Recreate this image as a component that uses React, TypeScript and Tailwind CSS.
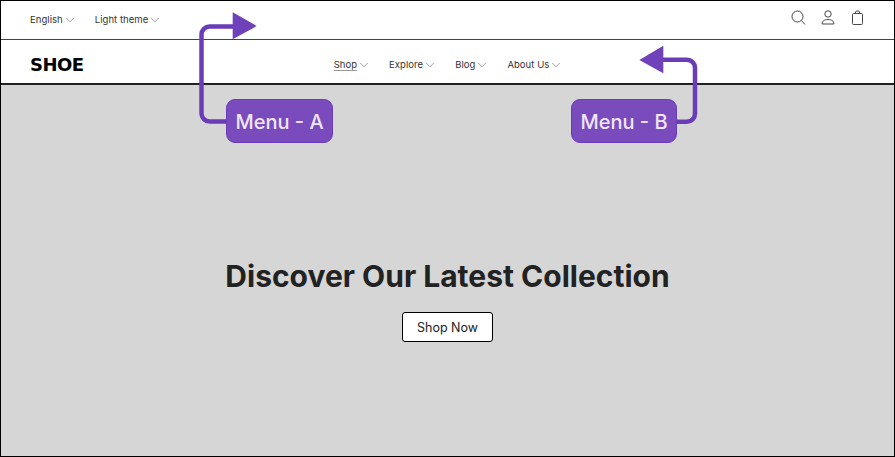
import { ChevronDown } from 'lucide-react';

function MenuItem({ label, active }: { label: string; active?: boolean }) {
  return (
    <span className="inline-flex items-center">
      <span className={active ? 'underline underline-offset-[2px] decoration-[#999]' : ''}>{label}</span>
      <ChevronDown size={14} strokeWidth={0.9} className="text-[#444]" />
    </span>
  );
}

function Callout({ label, className }: { label: string; className: string }) {
  return (
    <div
      className={`absolute top-[98px] h-[44px] flex items-center justify-center rounded-[9px] border border-[#6a3cb8] bg-[#7a4bbc] pt-[1px] text-[20px] font-[550] text-[#efe6fb] ${className}`}
    >
      {label}
    </div>
  );
}

export default function App() {
  return (
    <div className="relative h-[457px] w-[895px] overflow-hidden border border-black bg-[#d6d6d6] font-['Inter',sans-serif]">
      <div className="flex h-[39px] items-center justify-between border-b border-[#444] bg-white pl-[29px] pr-[30px] text-[9.500px] tracking-[0.05px] text-[#333]">
        <div className="flex items-center gap-[18px]">
          <MenuItem label="English" />
          <MenuItem label="Light theme" />
        </div>
        <div className="flex items-center pb-[6px] text-[#333]">
          <svg width="15" height="15" viewBox="0 0 15 15" fill="none" stroke="currentColor" strokeWidth="0.9">
            <circle cx="6.500" cy="6.500" r="5.500" />
            <path d="M10.500 10.500 14 14.500" />
          </svg>
          <svg className="ml-[15px]" width="14" height="15" viewBox="0 0 14 15" fill="none" stroke="currentColor" strokeWidth="0.9">
            <circle cx="7" cy="4" r="3.200" />
            <path d="M1.200 14c-.5-2.800 2.300-4.500 5.800-4.500s6.300 1.700 5.800 4.500z" />
          </svg>
          <svg className="ml-[16px]" width="13" height="15" viewBox="0 0 13 15" fill="none" stroke="currentColor" strokeWidth="0.9">
            <rect x="1.500" y="3.500" width="10" height="11" rx="1" />
            <path d="M4.500 3.500V2a1.500 1.500 0 0 1 1.500-1h1a1.500 1.500 0 0 1 1.500 1v1.500" />
          </svg>
        </div>
      </div>

      <div className="grid h-[45px] grid-cols-[1fr_auto_1fr] items-center border-b-2 border-[#222] bg-white pl-[29px] pr-[29px] pt-[7px] text-[9.500px] tracking-[0.05px] text-[#333]">
        <span className="font-['DejaVu_Sans',sans-serif] text-[18px] font-bold leading-none tracking-[-0.5px] text-black">SHOE</span>
        <nav className="ml-[2px] flex items-center gap-[18px]">
          <MenuItem label="Shop" active />
          <MenuItem label="Explore" />
          <MenuItem label="Blog" />
          <MenuItem label="About Us" />
        </nav>
      </div>

      <section className="flex flex-col items-center pt-[169px]">
        <h1 className="text-[30px] font-bold leading-[44px] text-[#222]">Discover Our Latest Collection</h1>
        <button className="mt-[14px] h-[30px] w-[91px] rounded-[3px] border border-black bg-white pt-[2px] text-[12.500px] text-[#222]">
          Shop Now
        </button>
      </section>

      <svg className="absolute -left-px -top-px" width="895" height="457" fill="none">
        <path d="M226 121.500H209.500a8 8 0 0 1-8-8V34.500a8 8 0 0 1 8-8H235" stroke="#6a3cb8" strokeWidth="4.500" />
        <path d="M232.700 12.300 256.700 26 232.700 39.300z" fill="#6f41ba" />
        <path d="M677 121.700H687a8 8 0 0 0 8-8V67.700a8 8 0 0 0-8-8H662" stroke="#6a3cb8" strokeWidth="4.500" />
        <path d="M663.300 45.700 639.300 60 663.300 73.300z" fill="#6f41ba" />
      </svg>
      <Callout label="Menu - A" className="left-[225px] w-[107px]" />
      <Callout label="Menu - B" className="left-[570px] w-[106px]" />
    </div>
  );
}
